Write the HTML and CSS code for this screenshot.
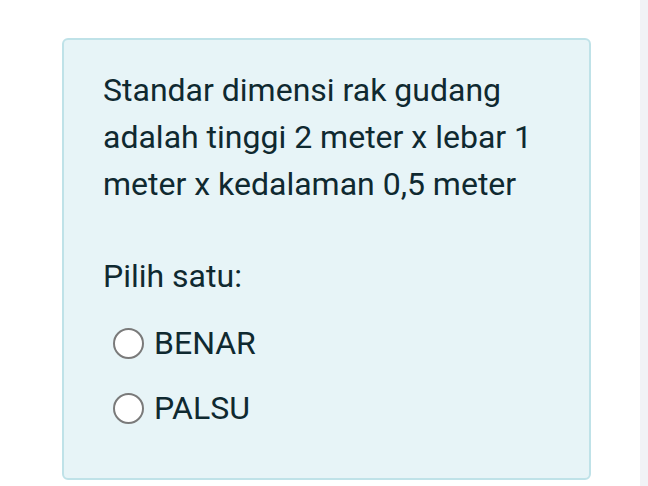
FILE: index.html
```html
<!DOCTYPE html>
<html>
<head>
<meta charset="utf-8">
<link rel="stylesheet" href="styles.css">
</head>
<body>
<div class="page">
  <main class="main">
    <div class="card">
      <p class="question">Standar dimensi rak gudang adalah tinggi 2 meter x lebar 1 meter x kedalaman 0,5 meter</p>
      <p class="prompt">Pilih satu:</p>
      <div class="options">
        <label class="option"><span class="radio"></span><span class="label">BENAR</span></label>
        <label class="option"><span class="radio"></span><span class="label">PALSU</span></label>
      </div>
    </div>
  </main>
  <aside class="side"></aside>
</div>
</body>
</html>
```

FILE: styles.css
```css
html, body {
  margin: 0;
  padding: 0;
  background: #ffffff;
}
.page {
  display: flex;
  width: 648px;
  height: 486px;
  overflow: hidden;
  font-family: Roboto, "Noto Sans", sans-serif;
  color: #0f2930;
}
.main {
  width: 640px;
  padding: 38px 0 0 62px;
  box-sizing: border-box;
}
.side {
  flex: 1;
  background: #f1f3f6;
}
.card {
  width: 529px;
  height: 442px;
  box-sizing: border-box;
  background: #e7f4f7;
  border: 2px solid #bfe2e8;
  border-radius: 6px;
  padding: 27px 40px 0 39px;
}
.question {
  margin: 0;
  font-size: 32px;
  line-height: 47px;
}
.prompt {
  margin: 48px 0 0;
  font-size: 32px;
  line-height: 40px;
}
.options {
  display: flex;
  flex-direction: column;
  gap: 25px;
  margin-top: 27px;
  padding-left: 10px;
}
.option {
  display: flex;
  align-items: center;
  gap: 10px;
  font-size: 32px;
  line-height: 40px;
}
.radio {
  width: 27px;
  height: 27px;
  border: 2px solid #7a7a7a;
  border-radius: 50%;
  background: #ffffff;
}
```
